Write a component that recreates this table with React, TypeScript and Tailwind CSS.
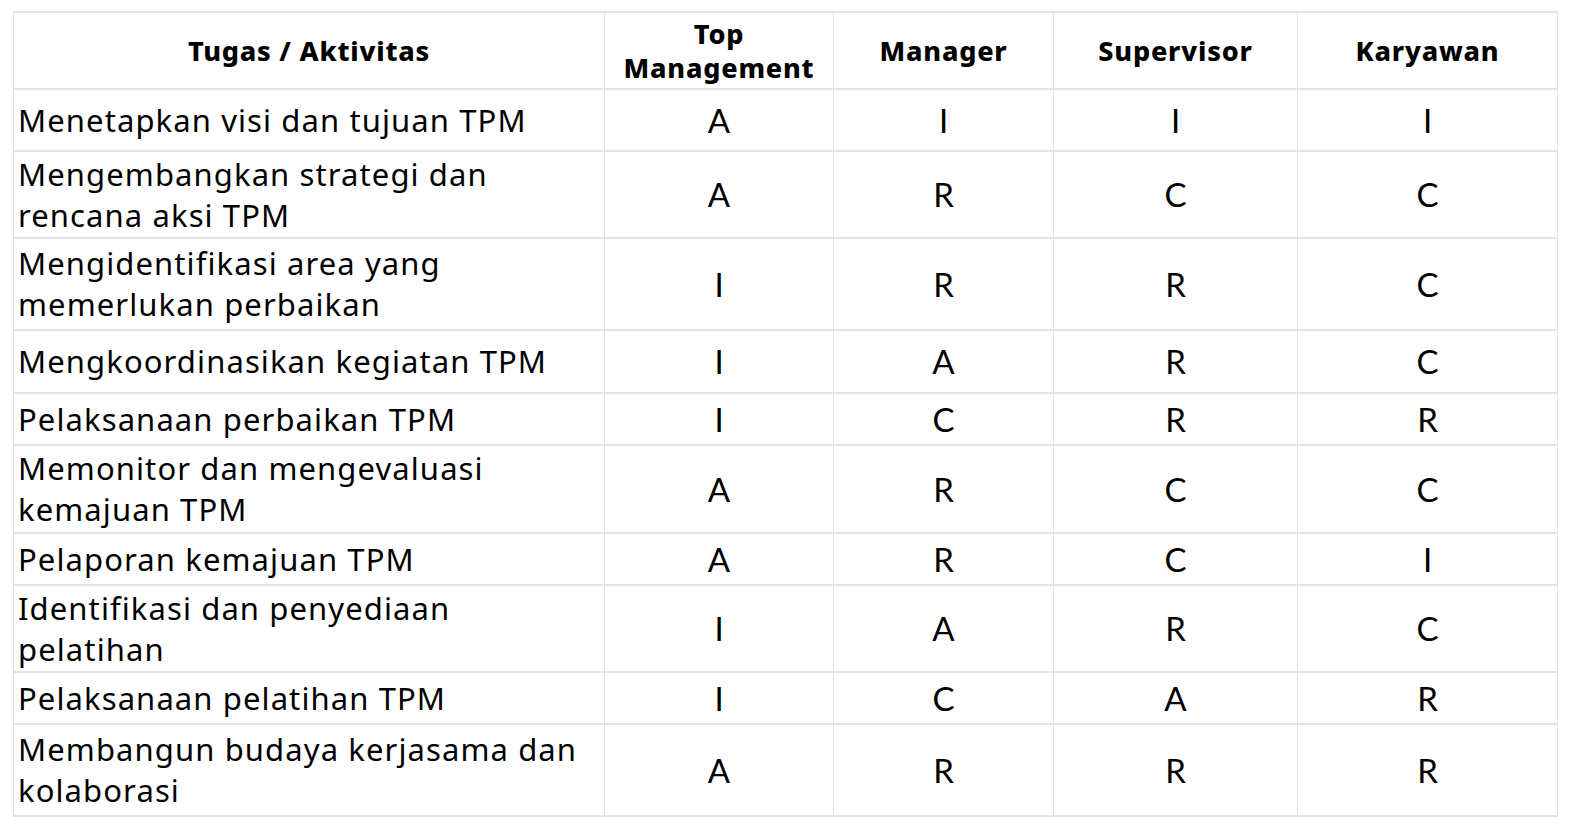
import React from "react";

interface RaciRow {
  task: string;
  top: string;
  manager: string;
  supervisor: string;
  karyawan: string;
  height: number;
}

const rows: RaciRow[] = [
  { task: "Menetapkan visi dan tujuan TPM", top: "A", manager: "I", supervisor: "I", karyawan: "I", height: 62 },
  { task: "Mengembangkan strategi dan rencana aksi TPM", top: "A", manager: "R", supervisor: "C", karyawan: "C", height: 87 },
  { task: "Mengidentifikasi area yang memerlukan perbaikan", top: "I", manager: "R", supervisor: "R", karyawan: "C", height: 92 },
  { task: "Mengkoordinasikan kegiatan TPM", top: "I", manager: "A", supervisor: "R", karyawan: "C", height: 63 },
  { task: "Pelaksanaan perbaikan TPM", top: "I", manager: "C", supervisor: "R", karyawan: "R", height: 52 },
  { task: "Memonitor dan mengevaluasi kemajuan TPM", top: "A", manager: "R", supervisor: "C", karyawan: "C", height: 88 },
  { task: "Pelaporan kemajuan TPM", top: "A", manager: "R", supervisor: "C", karyawan: "I", height: 52 },
  { task: "Identifikasi dan penyediaan pelatihan", top: "I", manager: "A", supervisor: "R", karyawan: "C", height: 87 },
  { task: "Pelaksanaan pelatihan TPM", top: "I", manager: "C", supervisor: "A", karyawan: "R", height: 52 },
  { task: "Membangun budaya kerjasama dan kolaborasi", top: "A", manager: "R", supervisor: "R", karyawan: "R", height: 92 },
];

const cell =
  "border-x border-b-2 border-[#e2e2ea] text-center text-[33px] leading-[41px] text-black font-['Lato',sans-serif]";

export default function App() {
  return (
    <div className="w-[1570px] h-[829px] bg-white pt-[11px] pl-[13px] font-['Noto_Sans',sans-serif]">
      <table className="border-collapse table-fixed w-[1544px] border-t-2 border-[#e2e2ea]">
        <colgroup>
          <col className="w-[591px]" />
          <col className="w-[229px]" />
          <col className="w-[220px]" />
          <col className="w-[244px]" />
          <col className="w-[260px]" />
        </colgroup>
        <thead>
          <tr className="h-[77px]">
            {["Tugas / Aktivitas", "Top Management", "Manager", "Supervisor", "Karyawan"].map((h) => (
              <th
                key={h}
                className="border-x border-b-2 border-[#e2e2ea] text-center text-[27px] leading-[34px] font-extrabold tracking-[0.8px] text-black px-0"
              >
                {h}
              </th>
            ))}
          </tr>
        </thead>
        <tbody>
          {rows.map((r) => (
            <tr key={r.task} style={{ height: r.height }}>
              <td className="border-x border-b-2 border-[#e2e2ea] text-left text-[31px] leading-[41px] text-black pl-[4px] pr-2 tracking-[1.1px]">
                {r.task}
              </td>
              <td className={cell}>{r.top}</td>
              <td className={cell}>{r.manager}</td>
              <td className={cell}>{r.supervisor}</td>
              <td className={cell}>{r.karyawan}</td>
            </tr>
          ))}
        </tbody>
      </table>
    </div>
  );
}
